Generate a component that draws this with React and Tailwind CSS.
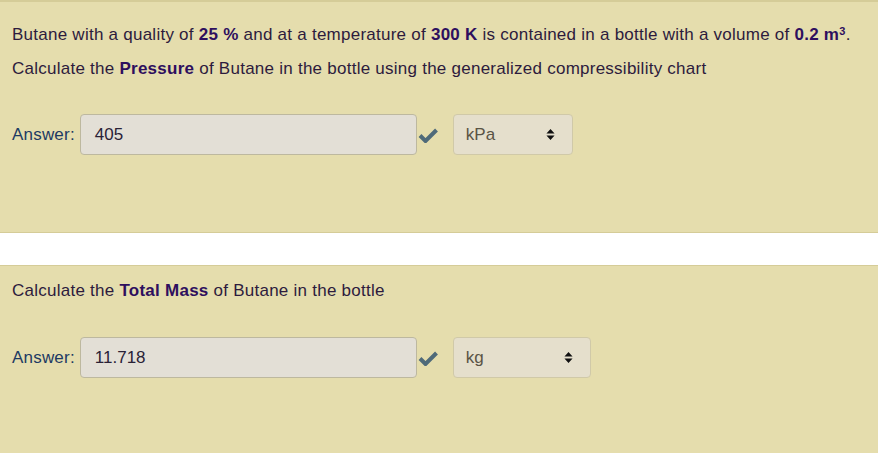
function AnswerRow({ value, unit, selectWidth }) {
  return (
    <div className="flex items-center">
      <span className="text-[17px] text-[#1d3a63] tracking-[0.2px] mr-[5px]">Answer:</span>
      <div className="w-[337px] h-[41px] flex items-center px-[14px] bg-[#e3dfd6] border border-[#bdb89f] rounded-[4px] text-[17px] text-[#2a2236]">
        {value}
      </div>
      <svg viewBox="0 0 20 16" className="w-[20px] h-[16px] ml-[1px]">
        <path d="M2 8.5 L7.5 14 L18.5 3" fill="none" stroke="#4f6a79" strokeWidth="4" strokeLinejoin="miter" />
      </svg>
      <div
        className={`${selectWidth} h-[41px] ml-[15px] flex items-center justify-between pl-[12px] pr-[17px] bg-[#e5dfcc] border border-[#d0c9a8] rounded-[4px] text-[17px] text-[#5a5445]`}
      >
        <span>{unit}</span>
        <svg viewBox="0 0 10 14" className="w-[9px] h-[13px]">
          <path d="M5 1 L9.5 6 H0.5 Z M5 13 L9.5 8 H0.5 Z" fill="#111" />
        </svg>
      </div>
    </div>
  );
}

export default function App() {
  return (
    <div className="w-[878px] h-[453px] bg-white font-['Liberation_Sans',Arial,sans-serif] overflow-hidden">
      {/* Question part 1 */}
      <div className="h-[233px] bg-[#e5ddad] border-t-[2px] border-b border-[#d5cc98] px-[12px] pt-[22px]">
        <p className="text-[17px] leading-[22px] text-[#2d1b3d] tracking-[0.25px]">
          Butane with a quality of <b className="text-[#2e0f5e]">25 %</b> and at a temperature of{' '}
          <b className="text-[#2e0f5e]">300 K</b> is contained in a bottle with a volume of{' '}
          <b className="text-[#2e0f5e]">
            0.2 m<sup className="text-[11px]">3</sup>
          </b>
          .
        </p>
        <p className="mt-[12px] text-[17px] leading-[22px] text-[#2d1b3d] tracking-[0.25px]">
          Calculate the <b className="text-[#2e0f5e]">Pressure</b> of Butane in the bottle using the generalized
          compressibility chart
        </p>
        <div className="mt-[34px]">
          <AnswerRow value="405" unit="kPa" selectWidth="w-[120px]" />
        </div>
      </div>

      <div className="h-[32px]" />

      {/* Question part 2 */}
      <div className="h-[200px] bg-[#e5ddad] border-t border-[#d5cc98] px-[12px] pt-[14px]">
        <p className="text-[17px] leading-[22px] text-[#2d1b3d] tracking-[0.25px]">
          Calculate the <b className="text-[#2e0f5e]">Total Mass</b> of Butane in the bottle
        </p>
        <div className="mt-[35px]">
          <AnswerRow value="11.718" unit="kg" selectWidth="w-[138px]" />
        </div>
      </div>
    </div>
  );
}
